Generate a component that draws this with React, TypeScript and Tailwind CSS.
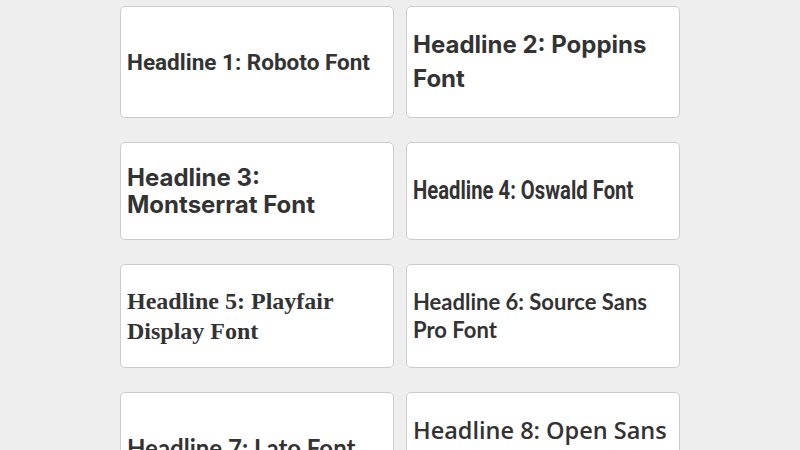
import React from "react";

type Headline = {
    id: number;
    label: string;
    className: string;
    // narrow families are squeezed from a regular face
    condensed?: boolean;
};

const headlines: Headline[] = [
    { id: 1, label: "Headline 1: Roboto Font", className: "font-['Roboto',sans-serif] font-bold text-[22.5px] leading-[28px]" },
    { id: 2, label: "Headline 2: Poppins Font", className: "font-['Inter',sans-serif] font-bold text-[24px] leading-[34px]" },
    { id: 3, label: "Headline 3: Montserrat Font", className: "font-['Inter',sans-serif] font-bold text-[24px] leading-[27px]" },
    { id: 4, label: "Headline 4: Oswald Font", className: "font-['Roboto',sans-serif] font-bold text-[25px] leading-[28px]", condensed: true },
    { id: 5, label: "Headline 5: Playfair Display Font", className: "font-['Liberation_Serif',serif] font-bold text-[24px] leading-[30px]" },
    { id: 6, label: "Headline 6: Source Sans Pro Font", className: "font-['Lato',sans-serif] font-bold text-[22px] leading-[28px]" },
    { id: 7, label: "Headline 7: Lato Font", className: "font-['Lato',sans-serif] font-bold text-[24px] leading-[29px]" },
    { id: 8, label: "Headline 8: Open Sans Font", className: "font-['Open_Sans',sans-serif] font-semibold text-[23.5px] leading-[33px]" },
];

export default function App() {
    return (
        <div className="min-h-screen bg-[#eeeeee] pt-[6px]">
            <div className="mx-auto grid w-[560px] grid-cols-2 gap-x-3 gap-y-6">
                {headlines.map((h) => (
                    <div
                        key={h.id}
                        className="flex items-center rounded-[5px] border border-[#cccccc] bg-white px-[6px] py-[21px]"
                    >
                        <h2 className={`text-[#333333] ${h.className}`}>
                            {h.condensed ? (
                                <span className="inline-block origin-left scale-x-[0.81] whitespace-nowrap">{h.label}</span>
                            ) : (
                                h.label
                            )}
                        </h2>
                    </div>
                ))}
            </div>
        </div>
    );
}
